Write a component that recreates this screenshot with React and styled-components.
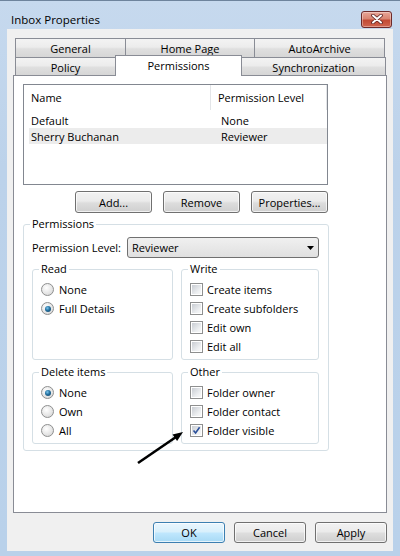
import React from "react";
import styled, { createGlobalStyle } from "styled-components";

const GlobalStyle = createGlobalStyle`
  html, body {
    margin: 0;
    padding: 0;
  }
  body {
    font-family: "Open Sans", "Noto Sans", sans-serif;
    font-size: 11px;
    color: #000;
  }
  * {
    box-sizing: border-box;
  }
`;

const tabs = [
  [
    { label: "General", w: 111 },
    { label: "Home Page", w: 130 },
    { label: "AutoArchive", w: 131 },
  ],
  [
    { label: "Policy", w: 101 },
    { label: "Permissions", w: 127, active: true },
    { label: "Synchronization", w: 145 },
  ],
];

const users = [
  { name: "Default", level: "None" },
  { name: "Sherry Buchanan", level: "Reviewer", selected: true },
];

function Checkbox({ checked }) {
  return (
    <Check>
      {checked && (
        <svg width="9" height="9" viewBox="0 0 9 9">
          <path d="M1.5 4.5 L3.6 7 L7.6 1.2" fill="none" stroke="#2a4f9a" strokeWidth="1.6" />
        </svg>
      )}
    </Check>
  );
}

function CheckItem({ label, checked }) {
  return (
    <Option $gap={4}>
      <Checkbox checked={checked} />
      {label}
    </Option>
  );
}

function RadioItem({ label, checked }) {
  return (
    <Option $gap={5}>
      <Radio>{checked && <Dot />}</Radio>
      {label}
    </Option>
  );
}

export default function App() {
  return (
    <>
      <GlobalStyle />
      <Window>
        <TitleBar>
          <Title>Inbox Properties</Title>
          <CloseButton>
            <svg width="12" height="10" viewBox="0 0 12 10">
              <path d="M2 1.5 L10 8.5 M10 1.5 L2 8.5" stroke="#5a2020" strokeWidth="3.6" strokeLinecap="round" />
              <path d="M2 1.5 L10 8.5 M10 1.5 L2 8.5" stroke="#fff" strokeWidth="2" strokeLinecap="round" />
            </svg>
          </CloseButton>
        </TitleBar>

        <Client>
          <Tabs>
            {tabs.map((row, i) => (
              <TabRow key={i} $h={i === 0 ? 19 : 18}>
                {row.map((t) => (
                  <Tab key={t.label} $w={t.w} $active={t.active}>
                    {t.label}
                  </Tab>
                ))}
              </TabRow>
            ))}
          </Tabs>

          <Panel>
            <ListBox>
              <ListHeader>
                <HeadCell $w={187}>Name</HeadCell>
                <HeadCell $w={116}>Permission Level</HeadCell>
              </ListHeader>
              <ListRows>
                {users.map((u) => (
                  <ListRow key={u.name} $selected={u.selected}>
                    <Cell $w={190}>{u.name}</Cell>
                    <Cell>{u.level}</Cell>
                  </ListRow>
                ))}
              </ListRows>
            </ListBox>

            <ListButtons>
              <Button $w={77} $h={22}>Add...</Button>
              <Button $w={77} $h={22}>Remove</Button>
              <Button $w={77} $h={22}>Properties...</Button>
            </ListButtons>

            <Group>
              <Legend>Permissions</Legend>
              <LevelRow>
                <LevelLabel>Permission Level:</LevelLabel>
                <Select>
                  Reviewer
                  <svg width="7" height="4" viewBox="0 0 7 4">
                    <polygon points="0,0 7,0 3.5,4" fill="#000" />
                  </svg>
                </Select>
              </LevelRow>

              <BoxGrid>
                <SubGroup>
                  <Legend>Read</Legend>
                  <RadioItem label="None" />
                  <RadioItem label="Full Details" checked />
                </SubGroup>
                <SubGroup>
                  <Legend>Write</Legend>
                  <CheckItem label="Create items" />
                  <CheckItem label="Create subfolders" />
                  <CheckItem label="Edit own" />
                  <CheckItem label="Edit all" />
                </SubGroup>
                <SubGroup>
                  <Legend>Delete items</Legend>
                  <RadioItem label="None" checked />
                  <RadioItem label="Own" />
                  <RadioItem label="All" />
                </SubGroup>
                <SubGroup>
                  <Legend>Other</Legend>
                  <CheckItem label="Folder owner" />
                  <CheckItem label="Folder contact" />
                  <CheckItem label="Folder visible" checked />
                </SubGroup>
              </BoxGrid>
            </Group>

            <Arrow width="52" height="38" viewBox="0 0 52 38">
              <line x1="2" y1="35" x2="40" y2="9" stroke="#000" strokeWidth="2.6" />
              <polygon points="47,4 41.1,13 36.5,6.4" fill="#000" />
            </Arrow>
          </Panel>

          <Footer>
            <Button $w={72} $h={21} $default>OK</Button>
            <Button $w={72} $h={21}>Cancel</Button>
            <Button $w={72} $h={21}>Apply</Button>
          </Footer>
        </Client>
      </Window>
    </>
  );
}

const Window = styled.div`
  width: 400px;
  height: 556px;
  display: flex;
  flex-direction: column;
  background: linear-gradient(180deg, #c6d9ee 0%, #bcd2ea 30%, #b9d1ea 100%);
  border-top: 1px solid #6e849d;
`;

const TitleBar = styled.div`
  height: 28px;
  display: flex;
  align-items: center;
  justify-content: space-between;
  padding: 8px 8px 0 11px;
`;

const Title = styled.div`
  font-size: 11.5px;
  color: #000;
`;

const CloseButton = styled.div`
  width: 31px;
  height: 17px;
  display: flex;
  align-items: center;
  justify-content: center;
  border: 1px solid #6d2a2a;
  border-radius: 3px;
  background: linear-gradient(180deg, #e8a597 0%, #d98572 45%, #c24a34 55%, #d0654f 100%);
  box-shadow: inset 0 0 0 1px rgba(255, 255, 255, 0.35);
`;

const Client = styled.div`
  flex: 1;
  margin: 0 7px 5px;
  background: #f0f0f0;
  padding: 9px 6px 8px;
  display: flex;
  flex-direction: column;
`;

const Tabs = styled.div`
  padding: 0 3px 0 2px;
`;

const TabRow = styled.div`
  display: flex;
  height: ${(p) => p.$h}px;
`;

const Tab = styled.div`
  flex: none;
  width: ${(p) => p.$w}px;
  height: ${(p) => (p.$active ? "21px" : "100%")};
  margin-top: ${(p) => (p.$active ? "-2px" : "0")};
  margin-left: -1px;
  position: relative;
  z-index: ${(p) => (p.$active ? 2 : 0)};
  display: flex;
  align-items: ${(p) => (p.$active ? "flex-start" : "center")};
  justify-content: center;
  padding-top: ${(p) => (p.$active ? "2px" : "1px")};
  border: 1px solid #898c95;
  border-bottom: none;
  background: ${(p) =>
    p.$active
      ? "#fff"
      : "linear-gradient(180deg, #f3f3f3 0%, #ececec 45%, #dfdfdf 55%, #d6d6d6 100%)"};

  &:first-child {
    margin-left: 0;
  }
`;

const Panel = styled.div`
  flex: 1;
  position: relative;
  background: #fff;
  border: 1px solid #898c95;
  padding: 8px 9px;
  display: flex;
  flex-direction: column;
`;

const ListBox = styled.div`
  width: 305px;
  height: 101px;
  border: 1px solid #828790;
  background: #fff;
`;

const ListHeader = styled.div`
  display: flex;
  height: 25px;
`;

const HeadCell = styled.div`
  width: ${(p) => p.$w}px;
  display: flex;
  align-items: center;
  padding-left: 7px;
  border-right: 1px solid #e3e5e8;
`;

const ListRows = styled.div`
  padding-top: 2px;
`;

const ListRow = styled.div`
  display: flex;
  align-items: center;
  height: 16px;
  margin-left: 5px;
  padding-left: 2px;
  background: ${(p) => (p.$selected ? "#ececec" : "transparent")};
`;

const Cell = styled.div`
  width: ${(p) => (p.$w ? `${p.$w}px` : "auto")};
  white-space: nowrap;
`;

const ListButtons = styled.div`
  width: 305px;
  display: flex;
  justify-content: flex-end;
  gap: 11px;
  margin-top: 6px;
`;

const Button = styled.div`
  width: ${(p) => p.$w}px;
  height: ${(p) => p.$h}px;
  display: flex;
  align-items: center;
  justify-content: center;
  border: 1px solid ${(p) => (p.$default ? "#3c7fb1" : "#707070")};
  border-radius: 3px;
  background: ${(p) =>
    p.$default
      ? "linear-gradient(180deg, #eaf6fd 0%, #d9f0fc 45%, #bee6fd 55%, #a7d9f5 100%)"
      : "linear-gradient(180deg, #f2f2f2 0%, #ebebeb 45%, #dddddd 55%, #cfcfcf 100%)"};
  box-shadow: inset 0 0 0 1px rgba(255, 255, 255, 0.7);
`;

const Group = styled.fieldset`
  width: 306px;
  margin: 4px 0 0;
  padding: 0 9px 6px 8px;
  border: 1px solid #d5dfe5;
  border-radius: 3px;
  min-inline-size: 0;
`;

const Legend = styled.legend`
  padding: 0 2px;
  margin-left: -2px;
  line-height: 14px;
  font-size: 11px;
`;

const LevelRow = styled.div`
  display: flex;
  align-items: center;
  margin-top: 6px;
`;

const LevelLabel = styled.div`
  width: 95px;
`;

const Select = styled.div`
  flex: 1;
  height: 21px;
  display: flex;
  align-items: center;
  justify-content: space-between;
  padding: 0 4px 0 4px;
  border: 1px solid #707070;
  border-radius: 3px;
  background: linear-gradient(180deg, #f0f0f0 0%, #e8e8e8 50%, #e0e0e0 100%);
`;

const BoxGrid = styled.div`
  display: grid;
  grid-template-columns: 141px 1fr;
  column-gap: 8px;
  row-gap: 5px;
  margin-top: 4px;
`;

const SubGroup = styled.fieldset`
  margin: 0;
  padding: 4px 6px 3px 8px;
  border: 1px solid #d5dfe5;
  border-radius: 3px;
  min-inline-size: 0;
`;

const Option = styled.div`
  display: flex;
  align-items: center;
  gap: ${(p) => p.$gap}px;
  height: 19px;
`;

const Check = styled.span`
  flex: none;
  width: 13px;
  height: 13px;
  display: flex;
  align-items: center;
  justify-content: center;
  border: 1px solid #8e8f8f;
  padding: 1px;
  background: linear-gradient(135deg, #c9cdd3 0%, #eef0f2 70%, #f8f8f8 100%) content-box, #fff;
`;

const Radio = styled.span`
  flex: none;
  width: 13px;
  height: 13px;
  display: flex;
  align-items: center;
  justify-content: center;
  border-radius: 50%;
  border: 1px solid #8e8f8f;
  background: radial-gradient(circle at 40% 35%, #ffffff 0%, #e6e6e6 55%, #cfcfcf 100%);
`;

const Dot = styled.span`
  width: 6px;
  height: 6px;
  border-radius: 50%;
  background: radial-gradient(circle at 40% 35%, #7cc4ec 0%, #23709f 45%, #153d5e 100%);
`;

const Arrow = styled.svg`
  position: absolute;
  left: 122px;
  top: 352px;
`;

const Footer = styled.div`
  display: flex;
  justify-content: flex-end;
  gap: 9px;
  margin-top: 9px;
`;
